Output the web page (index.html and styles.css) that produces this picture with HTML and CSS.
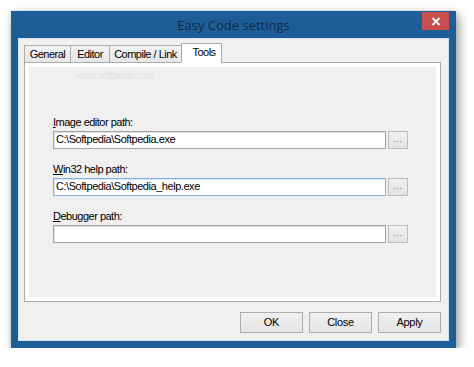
FILE: index.html
```html
<!DOCTYPE html>
<html>
<head>
<meta charset="utf-8">
<link rel="stylesheet" href="styles.css">
</head>
<body>
<div class="window">
  <div class="titlebar">
    <span class="title">Easy Code settings</span>
    <span class="close">
      <svg width="10" height="9" viewBox="0 0 10 9"><path d="M1.5 1 L8.5 8 M8.5 1 L1.5 8" stroke="#ffffff" stroke-width="1.8"/></svg>
    </span>
  </div>
  <div class="client">
    <div class="tabs">
      <div class="tab t-general">General</div>
      <div class="tab t-editor">Editor</div>
      <div class="tab t-compile">Compile / Link</div>
      <div class="tab active t-tools">Tools</div>
    </div>
    <div class="panel">
      <div class="inner">
        <div class="watermark">www.softpedia.com</div>
        <div class="form">
          <div class="field">
            <div class="label"><u>I</u>mage editor path:</div>
            <div class="row">
              <div class="input">C:\Softpedia\Softpedia.exe</div>
              <div class="browse">...</div>
            </div>
          </div>
          <div class="field">
            <div class="label"><u>W</u>in32 help path:</div>
            <div class="row">
              <div class="input focus">C:\Softpedia\Softpedia_help.exe</div>
              <div class="browse">...</div>
            </div>
          </div>
          <div class="field">
            <div class="label"><u>D</u>ebugger path:</div>
            <div class="row">
              <div class="input"></div>
              <div class="browse">...</div>
            </div>
          </div>
        </div>
      </div>
    </div>
    <div class="buttons">
      <div class="btn">OK</div>
      <div class="btn">Close</div>
      <div class="btn">Apply</div>
    </div>
  </div>
</div>
</body>
</html>
```
FILE: styles.css
```css
* { box-sizing: border-box; }
html, body { margin: 0; padding: 0; background: #ffffff; }
body { padding: 11px 0 0 11px; font-family: "Liberation Sans", Arial, sans-serif; }

.window {
  width: 445px;
  height: 337px;
  background: #1d5e98;
  padding: 0 7px 7px 7px;
  display: flex;
  flex-direction: column;
  box-shadow: 3px 4px 10px rgba(0,0,0,0.38), 0 0 4px rgba(0,0,0,0.12);
}

.titlebar {
  height: 27px;
  display: grid;
  grid-template-columns: 1fr auto 1fr;
  align-items: start;
}
.title {
  grid-column: 2;
  font-family: "Open Sans", "Noto Sans", sans-serif;
  font-size: 13px;
  color: #112a45;
  line-height: 28px;
  letter-spacing: 0px;
}
.close {
  grid-column: 3;
  justify-self: end;
  width: 27px;
  height: 18px;
  margin-top: 1px;
  background: #c74f4f;
  display: flex;
  align-items: center;
  justify-content: center;
}
.close svg { display: block; }

.client {
  flex: 1;
  background: #f0f0f0;
  border: 1px solid #d6e2ee;
  padding: 4px 7px 7px 5px;
  display: flex;
  flex-direction: column;
}

.tabs {
  height: 19px;
  display: flex;
  align-items: flex-end;
}
.tab {
  height: 17px;
  border: 1px solid #acacac;
  border-bottom: none;
  background: linear-gradient(#f2f2f2, #e6e6e6);
  font-size: 11px;
  letter-spacing: -0.5px;
  color: #000;
  line-height: 16px;
  text-align: center;
  margin-right: -1px;
}
.t-general { width: 47px; }
.t-editor { width: 40px; }
.t-compile { width: 73px; }
.t-tools { width: 41px; }
.tab.active {
  height: 20px;
  background: #ffffff;
  margin-bottom: -1px;
  z-index: 2;
  line-height: 17px;
  padding-left: 5px;
}

.panel {
  height: 240px;
  border: 1px solid #acacac;
  background: #ffffff;
  padding: 4px;
}
.inner {
  height: 100%;
  background: #f0f0f0;
  padding: 3px 0 0 24px;
}
.watermark {
  margin-left: 23px;
  font-size: 10px;
  line-height: 12px;
  color: #e2e2e2;
  letter-spacing: -0.5px;
}
.form {
  margin-top: 34px;
  display: flex;
  flex-direction: column;
  gap: 14px;
}
.field { display: flex; flex-direction: column; gap: 2px; }
.label {
  font-size: 11px;
  line-height: 13px;
  letter-spacing: -0.5px;
  color: #000;
}
.label u { text-decoration-thickness: 1px; text-underline-offset: 1px; }
.row { display: flex; gap: 2px; }
.input {
  width: 333px;
  height: 18px;
  background: #ffffff;
  border: 1px solid #a3a3a3;
  box-shadow: inset 1px 1px 0 #e2e2e2;
  font-size: 11px;
  letter-spacing: -0.45px;
  line-height: 15px;
  padding-left: 2px;
  color: #000;
}
.input.focus {
  border-color: #7fb1e2;
  box-shadow: inset 1px 1px 0 #d8e8f7;
}
.browse {
  width: 20px;
  height: 18px;
  border: 1px solid #bdbdbd;
  background: linear-gradient(#f0f0f0, #e3e3e3);
  font-size: 9px;
  color: #6a6a6a;
  text-align: center;
  line-height: 15px;
  letter-spacing: 0.5px;
}

.buttons {
  margin-top: 10px;
  display: flex;
  justify-content: flex-end;
  gap: 6px;
}
.btn {
  width: 63px;
  height: 21px;
  border: 1px solid #adadad;
  background: linear-gradient(#f0f0f0, #e5e5e5);
  font-size: 11px;
  line-height: 19px;
  text-align: center;
  color: #000;
  letter-spacing: -0.3px;
}
```
